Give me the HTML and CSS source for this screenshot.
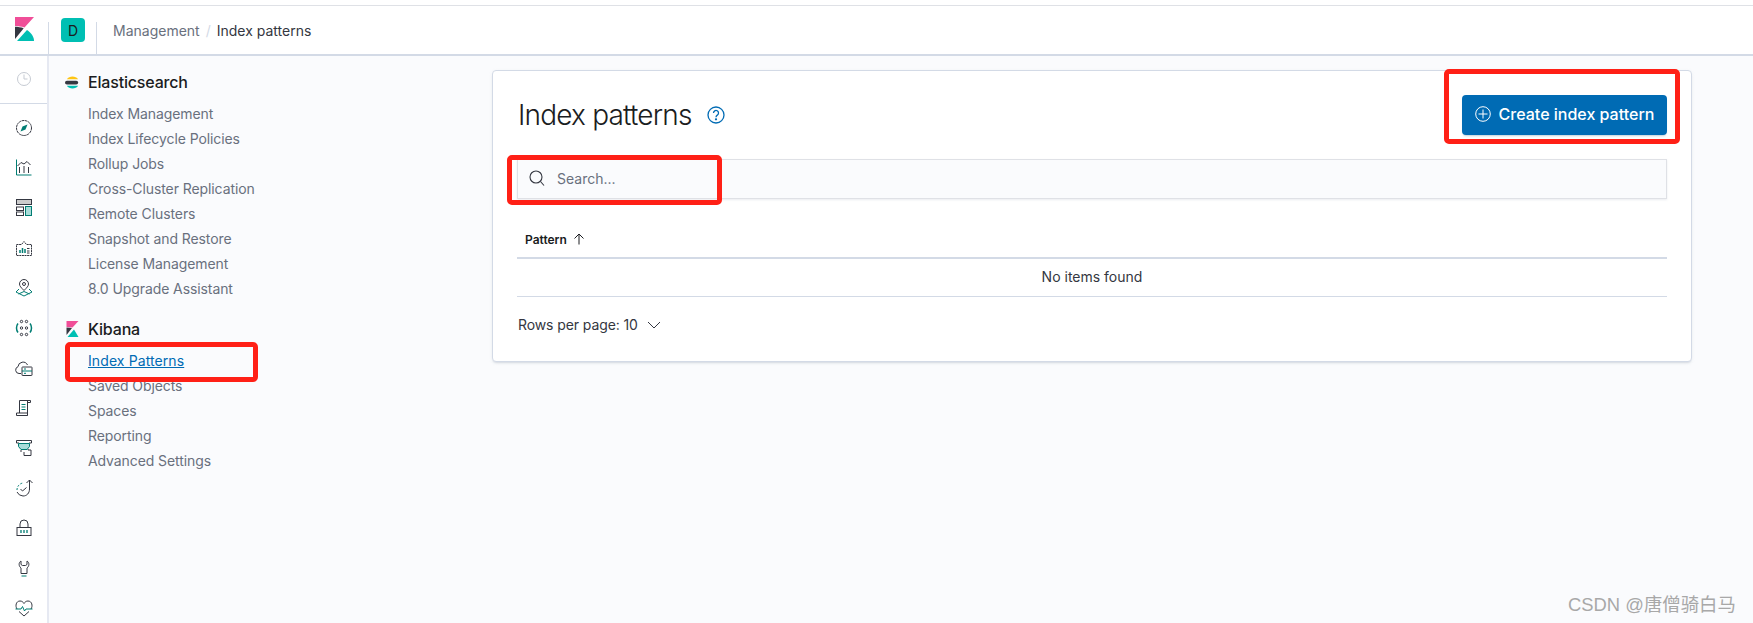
FILE: index.html
```html
<!DOCTYPE html>
<html lang="en">
<head>
<meta charset="utf-8">
<title>Index patterns</title>
<link rel="stylesheet" href="styles.css">
</head>
<body>
<div class="top-strip"></div>
<header class="header">
  <div class="logo-cell">
    <svg class="logo" viewBox="0 0 19 24"><path fill="#f04e98" d="M0 0h19L9.500 10.500C6.500 9.500 3 9 0 9z"/><path fill="#343741" d="M0 9.800c3 0 5.800.5 8.700 1.500L0 22z"/><path fill="#00bfb3" d="M2 24h17c0-4.500-3-8.500-7-11z"/></svg>
  </div>
  <div class="space-cell"><span class="avatar">D</span></div>
  <nav class="crumbs"><span class="crumb-link">Management</span><span class="crumb-sep">/</span><span class="crumb-current">Index patterns</span></nav>
</header>
<div class="main">
  <aside class="rail">
    <div class="rail-recent">
      <svg class="ico" viewBox="0 0 20 20" fill="none" stroke="#c6cbd3" stroke-width="1"><circle cx="10" cy="10" r="6.500"/><path d="M10 5.500V10h3.500"/></svg>
    </div>
    <div class="rail-list">
      <svg class="ico" viewBox="0 0 20 20" fill="none" stroke="#343741"><circle cx="10" cy="10" r="7.500" stroke-dasharray="2.500 .5"/><path fill="#017d73" stroke="none" d="M13.500 6.500l-2 5-5 2 2-5z"/></svg>
      <svg class="ico" viewBox="0 0 20 20" fill="none" stroke="#343741"><path stroke="#017d73" d="M2.500 1.500v15.500h15"/><path d="M5.500 15V9M10 15V8M14.500 15V9M3.500 8l3.500-3.500 3 1.500 3-2.500 3.500 3.500"/></svg>
      <svg class="ico" viewBox="0 0 20 20" fill="none" stroke="#343741"><rect x="2.500" y="1.500" width="15" height="5" fill="#ccc"/><rect x="2.500" y="9" width="7" height="3.500"/><rect x="2.500" y="14" width="7" height="3.500"/><rect x="11.500" y="8.500" width="6" height="9" stroke="#017d73" fill="#a9dcd8"/></svg>
      <svg class="ico" viewBox="0 0 20 20" fill="none" stroke="#343741"><path d="M2.500 6.500h5l2.500-3 2.500 3h5v11h-15z" stroke-dasharray="2 .6"/><path stroke="#017d73" stroke-width="1.500" d="M6 15v-3M8.500 15v-5M11 15v-4"/><path d="M13 10.500h2.500M13 13h2.500M13 15h2.500"/></svg>
      <svg class="ico" viewBox="0 0 20 20" fill="none" stroke="#343741"><path d="M10 12.500c-3-3-4.500-4.500-4.500-6.500a4.500 4.500 0 0 1 9 0c0 2-1.500 3.500-4.500 6.500z"/><circle cx="10" cy="6" r="1.500"/><path stroke="#017d73" d="M5 11l-3 3 8 4 8-4-3-3M4.500 16l5.500-2.500 5.500 2.500"/></svg>
      <svg class="ico" viewBox="0 0 20 20" fill="none" stroke="#343741"><circle cx="7.500" cy="3.500" r="1.200"/><circle cx="12.500" cy="3.500" r="1.200"/><circle cx="7.500" cy="10" r="1.200"/><circle cx="12.500" cy="10" r="1.200"/><circle cx="7.500" cy="16.500" r="1.200"/><circle cx="12.500" cy="16.500" r="1.200"/><path stroke="#017d73" stroke-width="1.500" d="M4 5.500C2 8 2 12 4 14.500M16 5.500c2 2.500 2 6.500 0 9"/></svg>
      <svg class="ico" viewBox="0 0 20 20" fill="none" stroke="#343741"><path d="M7 15.500H5a3.500 3.500 0 0 1-1-6.800A5 5 0 0 1 13.500 7"/><rect x="8" y="9" width="10" height="8.500" rx=".5"/><path stroke="#017d73" d="M8 13h10M10 11h2M10 15.300h2"/></svg>
      <svg class="ico" viewBox="0 0 20 20" fill="none" stroke="#343741"><path d="M5.500 2.500h11v2h-3M5.500 2.500v12.500M2.500 15v2.500h11V15h-11M13.500 17.500V2.500"/><path stroke="#017d73" d="M7.500 6.500h4M7.500 9h4M7.500 11.500h4"/></svg>
      <svg class="ico" viewBox="0 0 20 20" fill="none" stroke="#343741"><path d="M5 5H2.500V2.500h15V5H15M14 11v1h3v5.500h-7V14M7 14v-2"/><path fill="#a9dcd8" stroke="#017d73" d="M4.500 5.500h11v3l-2.500 3H7l-2.500-3z"/></svg>
      <svg class="ico" viewBox="0 0 20 20" fill="none" stroke="#343741"><path d="M9 18a7 7 0 0 1-6-4M9 18c4 0 6.500-3 6.500-7V2M12.500 5l3-3 3 3"/><path stroke="#017d73" stroke-dasharray="2 1.500" d="M3 12a7 7 0 0 1 6-7"/><path d="M6.500 11L8.500 13 12.500 9.500"/></svg>
      <svg class="ico" viewBox="0 0 20 20" fill="none" stroke="#343741"><rect x="3" y="9.500" width="14" height="8"/><path d="M6 9.500V6a4 4 0 0 1 8 0v3.500"/><path stroke="#017d73" stroke-width="1.300" d="M7 12v3M10 12v3M13 12v3"/></svg>
      <svg class="ico" viewBox="0 0 20 20" fill="none" stroke="#343741"><path d="M7 3C4.500 4.500 4.500 8 7 10v5.500h6V10c2.500-2 2.500-5.500 0-7v3.500l-1.500 1h-3L7 6.500z"/><path stroke="#017d73" d="M7.500 18h5"/></svg>
      <svg class="ico" viewBox="0 0 20 20" fill="none" stroke="#343741"><path d="M3 11C1 8 2 3 6 3c2 0 3 1 4 2.500C11 4 12 3 14 3c4 0 5 5 3 8M5 13.500L10 18l5-4.500"/><path stroke="#017d73" d="M1.500 11h5.500l1.500-2.500 2 4.500 1.500-2h6.500"/></svg>
    </div>
  </aside>
  <aside class="side">
    <section class="side-group">
      <h2 class="side-title">
        <svg class="side-ico" viewBox="0 0 16 18"><path fill="#fec514" d="M2 5.500A7 6 0 0 1 14 5.500z"/><rect fill="#343741" x="0" y="7" width="14" height="4" rx="2"/><path fill="#00bfb3" d="M2 12.500h12A7 6 0 0 1 2 12.500z"/></svg>
        Elasticsearch
      </h2>
      <a class="side-link">Index Management</a>
      <a class="side-link">Index Lifecycle Policies</a>
      <a class="side-link">Rollup Jobs</a>
      <a class="side-link">Cross-Cluster Replication</a>
      <a class="side-link">Remote Clusters</a>
      <a class="side-link">Snapshot and Restore</a>
      <a class="side-link">License Management</a>
      <a class="side-link">8.0 Upgrade Assistant</a>
    </section>
    <section class="side-group">
      <h2 class="side-title">
        <svg class="side-ico side-ico-kb" viewBox="0 0 12 16"><path fill="#f04e98" d="M0 0h12L6 6.500 0 6z"/><path fill="#343741" d="M0 6.500l5.500.5L0 14z"/><path fill="#00bfb3" d="M1 16h11L7.500 8.500z"/></svg>
        Kibana
      </h2>
      <a class="side-link side-link-active">Index Patterns</a>
      <a class="side-link">Saved Objects</a>
      <a class="side-link">Spaces</a>
      <a class="side-link">Reporting</a>
      <a class="side-link">Advanced Settings</a>
    </section>
  </aside>
  <main class="content">
    <section class="panel">
      <div class="panel-head">
        <div class="title-wrap">
          <h1 class="title">Index patterns</h1>
          <svg class="help" viewBox="0 0 18 18" fill="none" stroke="#006bb4" stroke-width="1.300"><circle cx="9" cy="9" r="8"/><path d="M6.500 7a2.500 2.500 0 1 1 3.800 2.100C9.400 9.700 9 10 9 11.200"/><circle cx="9" cy="13.300" r=".5" fill="#006bb4"/></svg>
        </div>
        <button class="create-btn">
          <svg class="plus" viewBox="0 0 16 16" fill="none" stroke="#fff"><circle cx="8" cy="8" r="7.300"/><path d="M8 3.500v9M3.500 8h9"/></svg>
          Create index pattern
        </button>
      </div>
      <div class="search">
        <svg class="search-ico" viewBox="0 0 16 16" fill="none" stroke="#343741" stroke-width="1.100"><circle cx="7" cy="7" r="6"/><path d="M11.500 11.500L15 15.500"/></svg>
        <span class="search-ph">Search...</span>
      </div>
      <table class="table">
        <thead><tr><th class="th">Pattern <svg class="arrow" viewBox="0 0 12 12" fill="none" stroke="#1a1c21"><path d="M6 11.500V1M1.500 5.500L6 1l4.500 4.500"/></svg></th></tr></thead>
        <tbody><tr><td class="td">No items found</td></tr></tbody>
      </table>
      <div class="rows">Rows per page: 10 <svg class="chev" viewBox="0 0 14 8" fill="none" stroke="#343741"><path d="M1 1l6 6 6-6"/></svg></div>
    </section>
  </main>
</div>
<div class="mark mark-btn"></div>
<div class="mark mark-search"></div>
<div class="mark mark-nav"></div>
<div class="watermark">CSDN @唐僧骑白马</div>
</body>
</html>
```

FILE: styles.css
```css
* { box-sizing: border-box; }
html, body { margin: 0; height: 100%; overflow: hidden; }
body { width: 1753px; height: 623px; position: relative; background: #fafbfd; color: #343741; font-family: Inter, "Noto Sans", sans-serif; font-size: 14px; display: flex; flex-direction: column; }

.top-strip { height: 6px; flex: none; background: #fff; border-bottom: 1px solid #dfe1e6; }
.header { height: 50px; flex: none; display: flex; align-items: stretch; background: #fff; border-bottom: 2px solid #d3dae6; }
.logo-cell { width: 49px; padding: 11px 0 0 15px; position: relative; }
.logo-cell::after { content: ""; position: absolute; right: 0; top: 16px; bottom: 0; width: 1px; background: #d3dae6; }
.logo { width: 19px; height: 24px; display: block; }
.space-cell { width: 48px; padding-top: 12px; padding-left: 12px; position: relative; }
.space-cell::after { content: ""; position: absolute; right: 0; top: 16px; bottom: 0; width: 1px; background: #d3dae6; }
.avatar { display: flex; width: 24px; height: 24px; border-radius: 4px; background: #00bfb3; color: #1a1c21; font-size: 14px; align-items: center; justify-content: center; }
.crumbs { display: flex; align-items: center; padding: 0 0 0 16px; font-size: 14px; }
.crumb-link { color: #69707d; }
.crumb-sep { color: #d3dae6; margin: 0 6px; }
.crumb-current { color: #343741; }

.main { flex: 1; min-height: 0; display: flex; }
.rail { width: 49px; flex: none; background: #fff; border-right: 2px solid #e6e9f2; }
.rail-recent { height: 48px; display: flex; align-items: center; justify-content: center; border-bottom: 1px solid #d3dae6; padding-bottom: 2px; }
.rail-list { display: flex; flex-direction: column; align-items: center; gap: 20px; padding-top: 14px; }
.ico { width: 20px; height: 20px; flex: none; display: block; margin-right: 0; }

.side { width: 443px; flex: none; padding: 16px 0 0 16px; }
.side-group { margin-bottom: 18px; }
.side-title { margin: 0 0 9px; height: 20px; display: flex; align-items: center; gap: 8px; font-size: 16px; font-weight: 500; color: #1a1c21; line-height: 20px; letter-spacing: -.18px; }
.side-ico { width: 15px; height: 17px; flex: none; }
.side-ico-kb { padding: 0 1px; height: 16px; }
.side-link { display: block; margin-left: 23px; height: 25px; line-height: 25px; color: #69707d; font-size: 14px; letter-spacing: -.09px; }
.side-link-active { color: #006bb4; text-decoration: underline; letter-spacing: .1px; }

.content { flex: 1; min-width: 0; padding-top: 14px; }
.panel { width: 1200px; height: 292px; background: #fff; border: 1px solid #d3dae6; border-radius: 4px; padding: 24px 24px 0 24px; box-shadow: 0 2px 2px -1px rgba(152,162,179,.3), 0 1px 5px -2px rgba(152,162,179,.3); }
.panel-head { height: 40px; display: flex; justify-content: space-between; align-items: center; }
.title-wrap { display: flex; align-items: center; gap: 15px; padding-left: 1px; }
.title { margin: 0; font-size: 28px; line-height: 40px; font-weight: 300; color: #1a1c21; letter-spacing: -.8px; }
.help { width: 18px; height: 18px; display: block; }
.create-btn { width: 205px; height: 40px; padding: 0 0 2px; background: #006bb4; color: #fff; border: 0; border-radius: 4px; font: 500 16px Inter, sans-serif; display: flex; align-items: center; justify-content: center; gap: 8px; box-shadow: 0 2px 2px -1px rgba(54,97,126,.3); }
.plus { width: 16px; height: 16px; flex: none; }
.search { margin-top: 24px; height: 40px; background: #fafbfd; border: 1px solid #dfe1e6; box-shadow: 0 1px 2px rgba(152,162,179,.2); display: flex; align-items: center; padding-left: 11px; gap: 12px; }
.search-ico { width: 16px; height: 16px; flex: none; margin-top: -2px; }
.search-ph { color: #69707d; font-size: 14px; margin-top: -1px; }
.table { width: 100%; border-collapse: collapse; margin-top: 22px; }
.th { height: 37px; padding: 0 0 0 8px; text-align: left; font-size: 12px; font-weight: 600; color: #1a1c21; border-bottom: 2px solid #d3dae6; }
.arrow { width: 12px; height: 12px; vertical-align: -1px; margin-left: 3px; }
.td { height: 38px; text-align: center; font-size: 14px; color: #343741; border-bottom: 1px solid #d3dae6; padding: 0 0 1px; }
.rows { margin-top: 18px; padding-left: 1px; font-size: 14px; line-height: 20px; color: #343741; display: flex; align-items: center; gap: 9px; letter-spacing: -.1px; }
.chev { width: 14px; height: 8px; flex: none; }

.mark { position: absolute; border: 5px solid #ff2016; border-radius: 5px; pointer-events: none; }
.mark-btn { left: 1444px; top: 69px; width: 236px; height: 75px; }
.mark-search { left: 507px; top: 155px; width: 215px; height: 50px; }
.mark-nav { left: 65px; top: 342px; width: 193px; height: 40px; }
.watermark { position: absolute; left: 1568px; top: 590px; font: 18.4px "Liberation Sans", "Noto Sans CJK SC", sans-serif; color: #a8a8a8; white-space: nowrap; }
```
